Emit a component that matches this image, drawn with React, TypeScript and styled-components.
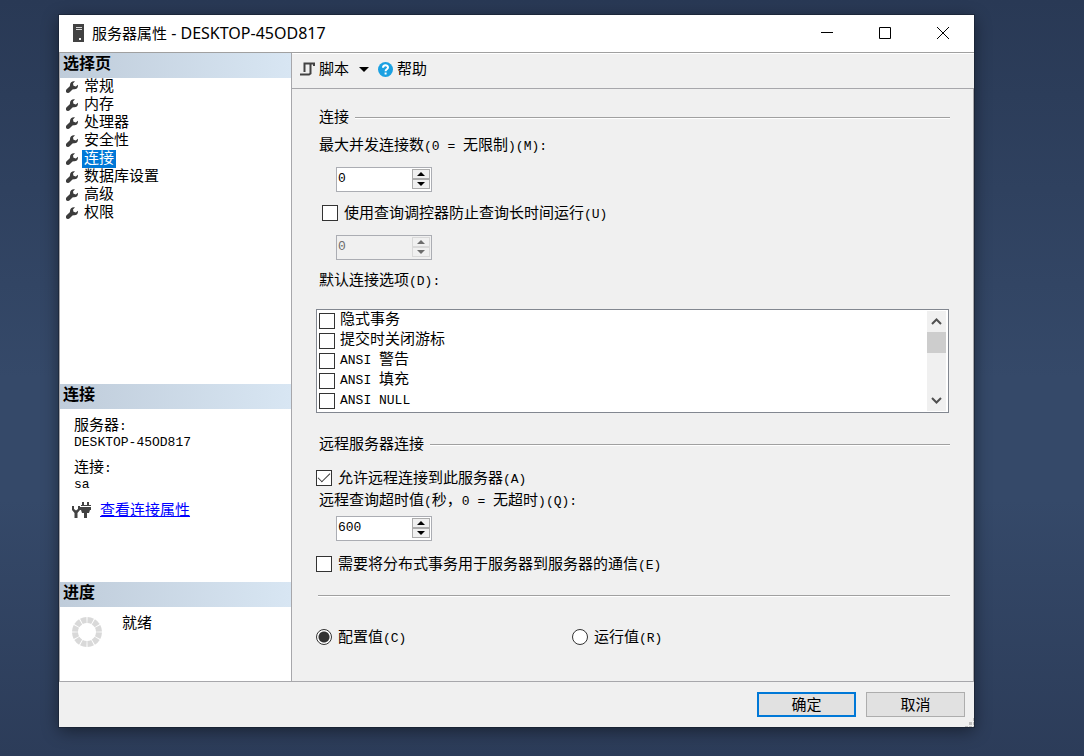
import React, { useState } from "react";
import styled, { createGlobalStyle, css } from "styled-components";

const GlobalStyle = createGlobalStyle`
  *, *::before, *::after { box-sizing: border-box; }
  body {
    margin: 0;
    background: #2d3d5b;
    color: #000;
    font: 15px/20px "Liberation Sans", "Noto Sans CJK SC", sans-serif;
  }
  button, input { font: inherit; color: inherit; }
`;

const Desktop = styled.div`
  display: flex;
  min-height: 100vh;
  padding: 15px 110px 29px 59px;
  background: linear-gradient(#293955, #354969 50%, #354969 66%, #2c3c59);
`;

const Window = styled.div`
  position: relative;
  display: flex;
  flex: 1;
  flex-direction: column;
  min-width: 0;
  background: #f0f0f0;
  box-shadow: 0 0 0 1px rgba(20, 28, 42, 0.5), 0 4px 16px rgba(0, 0, 0, 0.45);
`;

const TitleBar = styled.header`
  display: flex;
  align-items: center;
  height: 38px;
  padding: 0 2px 2px 14px;
  background: #fff;
  border-bottom: 1px solid #a0a0a0;
`;

const Title = styled.h1`
  flex: 1;
  margin: 0 0 0 8px;
  font: 400 15px/20px "Noto Sans", "Noto Sans CJK SC", sans-serif;
`;

const HostName = styled.span`
  font-size: 16px;
  line-height: 1px;
`;

const CaptionButton = styled.button`
  display: grid;
  place-items: center;
  width: 58px;
  height: 34px;
  padding: 0;
  border: 0;
  background: none;
`;

const Body = styled.div`
  display: flex;
  flex: 1;
  border-bottom: 1px solid #a7a7ab;
`;

const Sidebar = styled.aside`
  display: flex;
  flex-direction: column;
  width: 233px;
  flex-shrink: 0;
  background: #fff;
  border: solid #a7a7ab;
  border-width: 0 1px;
`;

const PanelHeader = styled.h2`
  height: 25px;
  margin: 0;
  padding: 0 3px;
  background: linear-gradient(90deg, #bfccda, #d8e6f3);
  font-size: 16px;
  font-weight: 700;
  line-height: 22px;
`;

const PageList = styled.ul`
  flex: 1;
  margin: 0;
  padding: 0 0 0 6px;
  list-style: none;
`;

const PageItem = styled.li`
  display: flex;
  align-items: center;
  gap: 4px;
  height: 18px;
`;

const PageButton = styled.button<{ $selected: boolean }>`
  height: 18px;
  padding: 0 2px 2px;
  border: 0;
  background: none;
  line-height: 16px;
  ${(p) => p.$selected && css`
    background: #0078d7;
    color: #fff;
  `}
`;

const ConnectionPanel = styled.div`
  height: 173px;
  padding: 8px 12px;
`;

const Facts = styled.dl`
  margin: 0;
  padding-left: 2px;
  line-height: 16px;
`;

const FactValue = styled.dd`
  margin: 0 0 10px;
`;

const LinkRow = styled.div`
  display: flex;
  align-items: center;
  gap: 8px;
`;

const TextLink = styled.a`
  color: #0000ff;
  line-height: 16px;
`;

const ProgressPanel = styled.div`
  display: flex;
  gap: 20px;
  height: 74px;
  padding: 6px 12px;
  svg { margin-top: 4px; }
`;

const Main = styled.main`
  display: flex;
  flex: 1;
  flex-direction: column;
  min-width: 0;
`;

const Toolbar = styled.div`
  display: flex;
  align-items: center;
  gap: 9px;
  height: 36px;
  padding: 0 8px 4px;
  border-top: 1px solid #fff;
  border-bottom: 1px solid #a7a7ab;
`;

const ToolButton = styled.button`
  display: flex;
  align-items: center;
  gap: 4px;
  padding: 0;
  border: 0;
  background: none;
`;

const Caret = styled.span`
  margin-left: 6px;
  border: 5px solid transparent;
  border-top-color: #000;
  border-bottom: 0;
`;

const Content = styled.form`
  flex: 1;
  padding: 18px 23px 34px 24px;
  border-right: 1px solid #a7a7ab;
`;

const GroupTitle = styled.h3<{ $gap?: number }>`
  display: flex;
  align-items: center;
  gap: 6px;
  margin: ${(p) => p.$gap ?? 0}px 0 0 3px;
  font-size: 15px;
  font-weight: 400;
  &::after {
    content: "";
    flex: 1;
    height: 2px;
    margin-top: 2px;
    background: #fff;
    border-top: 1px solid #a0a0a0;
  }
`;

const FieldLabel = styled.label<{ $gap: number }>`
  display: block;
  margin: ${(p) => p.$gap}px 0 0 3px;
`;

const CheckLabel = styled.label<{ $gap: number; $indent?: number }>`
  display: flex;
  align-items: center;
  width: fit-content;
  height: 20px;
  gap: 6px;
  margin: ${(p) => p.$gap}px 0 0 ${(p) => p.$indent ?? 0}px;
`;

const Latin = styled.span`
  font: 13px/1px "Liberation Mono", monospace;
  white-space: pre;
`;

const CheckBox = styled.input.attrs({ type: "checkbox" })`
  display: grid;
  place-items: center;
  appearance: none;
  width: 16px;
  height: 16px;
  flex-shrink: 0;
  margin: 0;
  background: #fff;
  border: 1px solid #333;
  &:checked::after {
    content: "";
    width: 12px;
    height: 6px;
    margin-bottom: 4px;
    border: solid #333;
    border-width: 0 0 1px 1px;
    transform: rotate(-45deg);
  }
`;

const Radio = styled.input.attrs({ type: "radio" })`
  appearance: none;
  width: 16px;
  height: 16px;
  margin: 0;
  border: 1px solid #333;
  border-radius: 50%;
  background: #fff;
  &:checked { background: radial-gradient(circle, #333 5px, #fff 6px); }
`;

const SpinFrame = styled.div<{ $gap: number; $disabled?: boolean }>`
  display: flex;
  width: 96px;
  height: 25px;
  margin: ${(p) => p.$gap}px 0 0 20px;
  padding: 1px;
  border: 1px solid #abadb3;
  background: ${(p) => (p.$disabled ? "#f0f0f0" : "#fff")};
  color: ${(p) => (p.$disabled ? "#6d6d6d" : "#000")};
`;

const SpinInput = styled.input`
  flex: 1;
  min-width: 0;
  height: 18px;
  padding: 0;
  border: 0;
  outline: 0;
  background: none;
  font: 13px/16px "Liberation Mono", monospace;
`;

const SpinButtons = styled.div`
  display: flex;
  flex-direction: column;
  width: 18px;
`;

const SpinButton = styled.button`
  display: grid;
  place-items: center;
  height: 10px;
  padding: 0;
  border: 1px solid #acacac;
  background: #f0f0f0;
  &:disabled { border-color: #d9d9d9; }
`;

const OptionBox = styled.div`
  display: flex;
  height: 104px;
  margin: 19px 1px 0 0;
  padding: 1px;
  border: 1px solid #828790;
  background: #fff;
`;

const OptionList = styled.div`
  flex: 1;
  padding-left: 1px;
`;

const OptionLabel = styled.label`
  display: flex;
  align-items: flex-start;
  gap: 5px;
  height: 20px;
  line-height: 16px;
  ${CheckBox} { margin-top: 2px; }
`;

const ScrollBar = styled.div`
  display: flex;
  flex-direction: column;
  width: 20px;
  border-right: 1px solid #fff;
  background: #f0f0f0;
`;

const ScrollButton = styled.button`
  display: grid;
  place-items: center;
  height: 21px;
  padding: 0;
  border: 0;
  background: none;
`;

const ScrollThumb = styled.div`
  height: 21px;
  margin-bottom: auto;
  background: #cdcdcd;
`;

const Divider = styled.hr`
  height: 2px;
  margin: 21px 0 0 2px;
  border: 0;
  border-top: 1px solid #a0a0a0;
  background: #fff;
`;

const RadioRow = styled.div`
  display: grid;
  grid-template-columns: 256px 1fr;
`;

const Footer = styled.footer`
  display: flex;
  justify-content: flex-end;
  gap: 10px;
  height: 45px;
  padding: 10px 9px;
`;

const DialogButton = styled.button<{ $primary?: boolean }>`
  width: 99px;
  height: 25px;
  padding: 0;
  border: ${(p) => (p.$primary ? "2px solid #0078d7" : "1px solid #adadad")};
  background: #e1e1e1;
`;

const Grip = styled.svg`
  position: absolute;
  right: 0;
  bottom: 0;
`;

const ServerIcon = () => (
  <svg width="11" height="18" viewBox="0 0 11 18" aria-hidden="true">
    <path fill="#424242" d="M0 0h11v18H0z" />
    <path stroke="#d8d8d8" d="M3 3.500h6M3 5.500h6" />
    <path fill="#f4f4f4" d="M6 14h2v2H6z" />
  </svg>
);

const WrenchIcon = () => (
  <svg width="12" height="12" viewBox="0 0 12 12" aria-hidden="true">
    <path
      fill="#3c3c3c"
      d="M9 .3C6.500-.4 3.800 1.200 4 4.200L3.800 5.300.6 8.200C-.4 9.300-.3 10.800.5 11.500c.9.800 2.300.6 3.200-.2L6.500 8.600l1.200-.3c2.500.4 4.800-1.600 4.200-4.500L9.800 5.600 7.500 4.800 7 2.500z"
    />
  </svg>
);

const PlugIcon = () => (
  <svg width="20" height="17" viewBox="0 0 20 17" aria-hidden="true">
    <path
      fill="#424242"
      d="M0 5h2v3l2 1.500L6 8V5h2v4l-2.500 3v5h-3v-5L0 9zM10 1h2v3h3V1h2v3h2v1H9V4h1zM8 6h11v3h-1l-1 3h-2v5h-3v-5h-2L9 9H8z"
    />
  </svg>
);

const ScriptIcon = () => (
  <svg width="15" height="14" viewBox="0 0 15 14" aria-hidden="true">
    <path fill="none" stroke="#424242" strokeWidth="2" d="M4.500 10V1.500H14V4M0 12.500h9l1.500-1V2" />
  </svg>
);

const HelpIcon = () => (
  <svg width="15" height="15" viewBox="0 0 15 15" aria-hidden="true">
    <circle cx="7.500" cy="7.500" r="7.500" fill="#1ba1e2" />
    <path fill="none" stroke="#fff" strokeWidth="2" d="M5 5.800C5 2.600 10 2.600 10 5.500c0 1.800-2.400 1.700-2.400 3.700M7.600 10.500v2" />
  </svg>
);

const Spinner = () => (
  <svg width="30" height="30" viewBox="0 0 30 30" aria-hidden="true">
    <circle cx="15" cy="15" r="12" fill="none" stroke="#d9d9d9" strokeWidth="6" pathLength="120" strokeDasharray="8.500 1.500" strokeDashoffset="-0.750" />
  </svg>
);

const Chevron = ({ down = false }: { down?: boolean }) => (
  <svg width="11" height="7" viewBox="0 0 11 7" aria-hidden="true">
    <path fill="none" stroke="#505050" strokeWidth="2" d={down ? "M1 1l4.500 4.500L10 1" : "M1 6l4.500-4.500L10 6"} />
  </svg>
);

const Triangle = ({ down = false }: { down?: boolean }) => (
  <svg width="8" height="4" viewBox="0 0 8 4" aria-hidden="true">
    <path fill="currentColor" d={down ? "M0 0h8L4 4z" : "M0 4h8L4 0z"} />
  </svg>
);

/* Sets runs of ASCII characters in the fixed-width face. */
const Mixed = ({ children }: { children: string }) => (
  <span>
    {children.split(/([\x20-\x7e]+)/).map((part, i) => (i % 2 ? <Latin key={i}>{part}</Latin> : part))}
  </span>
);

type SpinProps = { id: string; initial: number; gap: number; disabled?: boolean; label?: string };

const Spin = ({ id, initial, gap, disabled, label }: SpinProps) => {
  const [value, setValue] = useState(String(initial));
  const step = (by: number) => setValue((v) => String(Math.max(0, (Number(v) || 0) + by)));
  return (
    <SpinFrame $gap={gap} $disabled={disabled}>
      <SpinInput id={id} aria-label={label} value={value} disabled={disabled} onChange={(e) => setValue(e.target.value)} />
      <SpinButtons>
        <SpinButton type="button" aria-label="增加" disabled={disabled} onClick={() => step(1)}><Triangle /></SpinButton>
        <SpinButton type="button" aria-label="减少" disabled={disabled} onClick={() => step(-1)}><Triangle down /></SpinButton>
      </SpinButtons>
    </SpinFrame>
  );
};

const pages = ["常规", "内存", "处理器", "安全性", "连接", "数据库设置", "高级", "权限"];
const options = ["隐式事务", "提交时关闭游标", "ANSI 警告", "ANSI 填充", "ANSI NULL"];

export default function App() {
  const [page, setPage] = useState("连接");
  const [governor, setGovernor] = useState(false);
  return (
    <>
      <GlobalStyle />
      <Desktop>
        <Window>
          <TitleBar>
            <ServerIcon />
            <Title>服务器属性<HostName> - DESKTOP-45OD817</HostName></Title>
            <CaptionButton aria-label="最小化">
              <svg width="12" height="12"><path stroke="#000" d="M0 5.500h12" /></svg>
            </CaptionButton>
            <CaptionButton aria-label="最大化">
              <svg width="12" height="12"><path fill="none" stroke="#000" d="M.5.500h11v11H.5z" /></svg>
            </CaptionButton>
            <CaptionButton aria-label="关闭">
              <svg width="12" height="12"><path stroke="#000" d="M0 0l12 12M12 0L0 12" /></svg>
            </CaptionButton>
          </TitleBar>
          <Body>
            <Sidebar>
              <PanelHeader>选择页</PanelHeader>
              <PageList>
                {pages.map((name) => (
                  <PageItem key={name}>
                    <WrenchIcon />
                    <PageButton $selected={name === page} onClick={() => setPage(name)}>{name}</PageButton>
                  </PageItem>
                ))}
              </PageList>
              <PanelHeader>连接</PanelHeader>
              <ConnectionPanel>
                <Facts>
                  <dt><Mixed>服务器:</Mixed></dt>
                  <FactValue><Mixed>DESKTOP-45OD817</Mixed></FactValue>
                  <dt><Mixed>连接:</Mixed></dt>
                  <FactValue><Mixed>sa</Mixed></FactValue>
                </Facts>
                <LinkRow>
                  <PlugIcon />
                  <TextLink href="#">查看连接属性</TextLink>
                </LinkRow>
              </ConnectionPanel>
              <PanelHeader>进度</PanelHeader>
              <ProgressPanel>
                <Spinner />
                <span>就绪</span>
              </ProgressPanel>
            </Sidebar>
            <Main>
              <Toolbar>
                <ToolButton><ScriptIcon />脚本<Caret /></ToolButton>
                <ToolButton><HelpIcon />帮助</ToolButton>
              </Toolbar>
              <Content>
                <GroupTitle>连接</GroupTitle>
                <FieldLabel $gap={8} htmlFor="max"><Mixed>最大并发连接数(0 = 无限制)(M):</Mixed></FieldLabel>
                <Spin id="max" initial={0} gap={12} />
                <CheckLabel $gap={11} $indent={6}>
                  <CheckBox checked={governor} onChange={(e) => setGovernor(e.target.checked)} />
                  <Mixed>使用查询调控器防止查询长时间运行(U)</Mixed>
                </CheckLabel>
                <Spin id="governor" initial={0} gap={12} disabled={!governor} label="查询调控器" />
                <FieldLabel as="div" $gap={10}><Mixed>默认连接选项(D):</Mixed></FieldLabel>
                <OptionBox>
                  <OptionList>
                    {options.map((name) => (
                      <OptionLabel key={name}><CheckBox /><Mixed>{name}</Mixed></OptionLabel>
                    ))}
                  </OptionList>
                  <ScrollBar>
                    <ScrollButton type="button" aria-label="向上"><Chevron /></ScrollButton>
                    <ScrollThumb />
                    <ScrollButton type="button" aria-label="向下"><Chevron down /></ScrollButton>
                  </ScrollBar>
                </OptionBox>
                <GroupTitle $gap={21}>远程服务器连接</GroupTitle>
                <CheckLabel $gap={14}>
                  <CheckBox defaultChecked />
                  <Mixed>允许远程连接到此服务器(A)</Mixed>
                </CheckLabel>
                <FieldLabel $gap={2} htmlFor="timeout"><Mixed>远程查询超时值(秒，0 = 无超时)(Q):</Mixed></FieldLabel>
                <Spin id="timeout" initial={600} gap={6} />
                <CheckLabel $gap={13}>
                  <CheckBox />
                  <Mixed>需要将分布式事务用于服务器到服务器的通信(E)</Mixed>
                </CheckLabel>
                <Divider />
                <RadioRow>
                  <CheckLabel $gap={30}><Radio name="values" defaultChecked /><Mixed>配置值(C)</Mixed></CheckLabel>
                  <CheckLabel $gap={30}><Radio name="values" /><Mixed>运行值(R)</Mixed></CheckLabel>
                </RadioRow>
              </Content>
            </Main>
          </Body>
          <Footer>
            <DialogButton $primary>确定</DialogButton>
            <DialogButton>取消</DialogButton>
          </Footer>
          <Grip width="9" height="9" viewBox="0 0 9 9" aria-hidden="true">
            <path fill="#bfbfbf" d="M0 8h3v1H0zM4 8h3v1H4zM8 8h1v1H8zM4 4h3v3H4zM8 4h1v3H8zM8 0h1v3H8z" />
          </Grip>
        </Window>
      </Desktop>
    </>
  );
}
